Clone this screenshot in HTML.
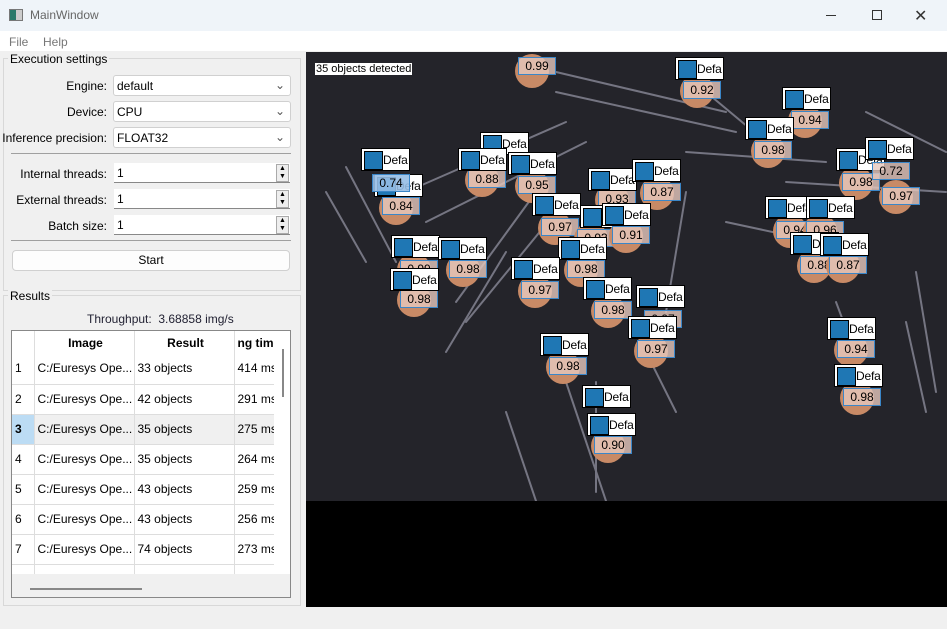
<!DOCTYPE html>
<html><head><meta charset="utf-8"><style>
*{box-sizing:border-box;margin:0;padding:0}
body{width:947px;height:629px;overflow:hidden;background:#f0f0f0;font-family:"Liberation Sans",sans-serif;font-size:12px;color:#000;position:relative}
.a{position:absolute}
.title{left:0;top:0;width:947px;height:31px;background:#eff4f9}
.menu{left:0;top:31px;width:947px;height:20px;background:#fff;color:#777;font-size:12px}
.lbl{text-align:right;font-size:12px}
.combo{background:#fff;border:1px solid #d0d0d0;border-radius:3px;height:21px;padding:3px 3px;font-size:12px}
.spin{background:#fff;border-bottom:1px solid #888;height:20px;padding:3px 3px;font-size:12px}
.img{left:306px;top:52px;width:641px;height:449px;background:#24242a;overflow:hidden}
.d{position:absolute;width:49px;height:23px;background:#fff;border:1px solid #000;font-size:12px;padding:4px 0 0 21px;white-space:nowrap;letter-spacing:-0.2px}
.d:before{content:"";position:absolute;left:2px;top:2px;width:17px;height:17px;background:#1f77b4;border:1px solid #000}
.s{position:absolute;width:38px;height:18px;background:rgba(230,200,190,.8);border:1px solid #3a86c8;font-size:12px;text-align:center;line-height:16px}
.c{position:absolute;width:34px;height:34px;border-radius:50%;background:#c88a66}
table{border-collapse:collapse;table-layout:fixed}
td{height:30px;line-height:29px;border-right:1px solid #ddd;border-bottom:1px solid #ddd;padding:0 0 0 3px;font-size:12px;white-space:nowrap;overflow:hidden}
</style></head><body>
<div class="a title"></div>
<div class="a" style="left:9px;top:9px;width:14px;height:12px;border:1px solid #777;background:linear-gradient(90deg,#2a7a6a 50%,#ccc 50%)"></div>
<div class="a" style="left:30px;top:8px;font-size:12px;color:#666">MainWindow</div>
<div class="a" style="left:826px;top:15px;width:10px;height:1px;background:#333"></div>
<div class="a" style="left:872px;top:10px;width:10px;height:10px;border:1px solid #333"></div>
<div class="a" style="left:914px;top:6px;font-size:16px;color:#333">✕</div>
<div class="a menu"><span class="a" style="left:9px;top:4px">File</span><span class="a" style="left:43px;top:4px">Help</span></div>

<div class="a" style="left:3px;top:58px;width:298px;height:233px;border:1px solid #d8d8d8"></div>
<div class="a" style="left:8px;top:52px;background:#f0f0f0;padding:0 2px">Execution settings</div>
<div class="a lbl" style="left:0;top:79px;width:107px">Engine:</div>
<div class="a combo" style="left:113px;top:75px;width:178px">default<span class="a" style="right:5px;top:2px;color:#555">⌄</span></div>
<div class="a lbl" style="left:0;top:105px;width:107px">Device:</div>
<div class="a combo" style="left:113px;top:101px;width:178px">CPU<span class="a" style="right:5px;top:2px;color:#555">⌄</span></div>
<div class="a lbl" style="left:0;top:131px;width:107px">Inference precision:</div>
<div class="a combo" style="left:113px;top:127px;width:178px">FLOAT32<span class="a" style="right:5px;top:2px;color:#555">⌄</span></div>
<div class="a" style="left:11px;top:153px;width:280px;height:1px;background:#a0a0a0"></div>
<div class="a lbl" style="left:0;top:167px;width:107px">Internal threads:</div>
<div class="a spin" style="left:114px;top:163px;width:176px">1</div>
<div class="a lbl" style="left:0;top:193px;width:107px">External threads:</div>
<div class="a spin" style="left:114px;top:189px;width:176px">1</div>
<div class="a lbl" style="left:0;top:219px;width:107px">Batch size:</div>
<div class="a spin" style="left:114px;top:215px;width:176px">1</div>
<div class="a" style="left:276px;top:164px;width:13px;height:18px;border:1px solid #aaa;background:#eee;font-size:7px;text-align:center;line-height:8px">▲<br>▼</div>
<div class="a" style="left:276px;top:190px;width:13px;height:18px;border:1px solid #aaa;background:#eee;font-size:7px;text-align:center;line-height:8px">▲<br>▼</div>
<div class="a" style="left:276px;top:216px;width:13px;height:18px;border:1px solid #aaa;background:#eee;font-size:7px;text-align:center;line-height:8px">▲<br>▼</div>
<div class="a" style="left:11px;top:240px;width:280px;height:1px;background:#a0a0a0"></div>
<div class="a" style="left:12px;top:250px;width:278px;height:21px;background:#fdfdfd;border:1px solid #d0d0d0;border-radius:4px;text-align:center;line-height:19px">Start</div>

<div class="a" style="left:3px;top:295px;width:298px;height:311px;border:1px solid #d8d8d8"></div>
<div class="a" style="left:8px;top:289px;background:#f0f0f0;padding:0 2px">Results</div>
<div class="a" style="left:87px;top:312px;color:#223">Throughput:&nbsp; 3.68858 img/s</div>
<div class="a" style="left:11px;top:330px;width:280px;height:268px;border:1px solid #888;background:#fff;overflow:hidden">
<table class="a" style="left:0;top:0;width:270px">
<colgroup><col style="width:22px"><col style="width:100px"><col style="width:100px"><col style="width:48px"></colgroup>
<tr style="font-weight:bold"><td style="height:23px;line-height:22px;border-bottom:0"></td><td style="height:23px;line-height:22px;text-align:center;border-bottom:0">Image</td><td style="height:23px;line-height:22px;text-align:center;border-bottom:0">Result</td><td style="height:23px;line-height:22px;border-right:0;border-bottom:0">ng time</td></tr>
<tr><td>1</td><td>C:/Euresys Ope...</td><td>33 objects</td><td>414 ms</td></tr>
<tr><td>2</td><td>C:/Euresys Ope...</td><td>42 objects</td><td>291 ms</td></tr>
<tr style="background:#f0f0f0"><td style="background:#bcdcf4;font-weight:bold">3</td><td>C:/Euresys Ope...</td><td>35 objects</td><td>275 ms</td></tr>
<tr><td>4</td><td>C:/Euresys Ope...</td><td>35 objects</td><td>264 ms</td></tr>
<tr><td>5</td><td>C:/Euresys Ope...</td><td>43 objects</td><td>259 ms</td></tr>
<tr><td>6</td><td>C:/Euresys Ope...</td><td>43 objects</td><td>256 ms</td></tr>
<tr><td>7</td><td>C:/Euresys Ope...</td><td>74 objects</td><td>273 ms</td></tr>
<tr><td>8</td><td>C:/Euresys Ope...</td><td>52 objects</td><td>287 ms</td></tr>
</table>
<div class="a" style="left:262px;top:0;width:18px;height:268px;background:#fff"></div>
<div class="a" style="left:270px;top:18px;width:2px;height:48px;background:#888"></div>
<div class="a" style="left:0;top:243px;width:280px;height:25px;background:#f0f0f0"></div>
<div class="a" style="left:18px;top:257px;width:112px;height:2px;background:#888"></div>
</div>

<div class="a img">
<svg class="a" style="left:0;top:0" width="641" height="449" stroke-linecap="round">
<g stroke="#8a8a98" stroke-width="2" fill="none" opacity=".8">
<line x1="40" y1="115" x2="90" y2="210"/><line x1="20" y1="140" x2="60" y2="210"/>
<line x1="100" y1="140" x2="260" y2="70"/><line x1="120" y1="170" x2="280" y2="90"/>
<line x1="250" y1="20" x2="420" y2="60"/><line x1="250" y1="40" x2="430" y2="80"/>
<line x1="150" y1="250" x2="230" y2="140"/><line x1="160" y1="270" x2="250" y2="160"/>
<line x1="140" y1="300" x2="200" y2="200"/><line x1="480" y1="130" x2="640" y2="140"/>
<line x1="420" y1="170" x2="560" y2="200"/><line x1="380" y1="100" x2="520" y2="110"/>
<line x1="290" y1="330" x2="290" y2="440"/><line x1="260" y1="330" x2="300" y2="449"/>
<line x1="330" y1="280" x2="370" y2="360"/><line x1="600" y1="270" x2="620" y2="360"/>
<line x1="530" y1="250" x2="560" y2="330"/><line x1="380" y1="140" x2="360" y2="260"/>
<line x1="610" y1="220" x2="630" y2="340"/><line x1="200" y1="360" x2="230" y2="449"/>
<line x1="400" y1="40" x2="460" y2="90"/><line x1="560" y1="60" x2="640" y2="100"/>
</g></svg>
<div class="a" style="left:9px;top:11px;background:#fff;font-size:11px;padding:0 1px">35 objects detected</div>
<div class="c" style="left:209px;top:2px"></div><div class="s" style="left:212px;top:5px">0.99</div>
<div class="c" style="left:374px;top:22px"></div><div class="s" style="left:377px;top:29px">0.92</div><div class="d" style="left:369px;top:5px">Defa</div>
<div class="c" style="left:482px;top:52px"></div><div class="s" style="left:485px;top:59px">0.94</div><div class="d" style="left:476px;top:35px">Defa</div>
<div class="c" style="left:445px;top:82px"></div><div class="s" style="left:448px;top:89px">0.98</div><div class="d" style="left:439px;top:65px">Defa</div>
<div class="c" style="left:159px;top:111px"></div><div class="s" style="left:162px;top:118px">0.88</div><div class="d" style="left:174px;top:80px">Defa</div><div class="d" style="left:152px;top:96px">Defa</div>
<div class="c" style="left:209px;top:117px"></div><div class="s" style="left:212px;top:124px">0.95</div><div class="d" style="left:202px;top:100px">Defa</div>
<div class="c" style="left:533px;top:114px"></div><div class="s" style="left:536px;top:121px">0.98</div><div class="d" style="left:530px;top:96px">Defa</div>
<div class="c" style="left:573px;top:128px"></div><div class="s" style="left:576px;top:135px">0.97</div><div class="s" style="left:566px;top:110px">0.72</div><div class="d" style="left:559px;top:85px">Defa</div>
<div class="c" style="left:73px;top:139px"></div><div class="s" style="left:76px;top:145px">0.84</div><div class="d" style="left:68px;top:122px">Defa</div><div class="s" style="left:66px;top:122px;background:rgba(150,190,230,.9)">0.74</div><div class="d" style="left:55px;top:96px">Defa</div>
<div class="c" style="left:289px;top:131px"></div><div class="s" style="left:292px;top:138px">0.93</div><div class="d" style="left:282px;top:116px">Defa</div>
<div class="c" style="left:334px;top:124px"></div><div class="s" style="left:337px;top:131px">0.87</div><div class="d" style="left:326px;top:107px">Defa</div>
<div class="c" style="left:232px;top:159px"></div><div class="s" style="left:235px;top:166px">0.97</div><div class="d" style="left:226px;top:141px">Defa</div>
<div class="c" style="left:268px;top:170px"></div><div class="s" style="left:271px;top:177px">0.93</div><div class="d" style="left:274px;top:153px">Defa</div>
<div class="c" style="left:303px;top:167px"></div><div class="s" style="left:306px;top:174px">0.91</div><div class="d" style="left:296px;top:151px">Defa</div>
<div class="c" style="left:467px;top:162px"></div><div class="s" style="left:470px;top:169px">0.94</div><div class="d" style="left:459px;top:144px">Defa</div>
<div class="c" style="left:497px;top:162px"></div><div class="s" style="left:500px;top:169px">0.96</div><div class="d" style="left:500px;top:144px">Defa</div>
<div class="c" style="left:91px;top:201px"></div><div class="s" style="left:94px;top:208px">0.99</div><div class="d" style="left:85px;top:183px">Defa</div>
<div class="c" style="left:140px;top:201px"></div><div class="s" style="left:143px;top:208px">0.98</div><div class="d" style="left:132px;top:185px">Defa</div>
<div class="c" style="left:258px;top:201px"></div><div class="s" style="left:261px;top:208px">0.98</div><div class="d" style="left:252px;top:185px">Defa</div>
<div class="c" style="left:491px;top:197px"></div><div class="s" style="left:494px;top:204px">0.88</div><div class="d" style="left:484px;top:180px">Defa</div>
<div class="c" style="left:520px;top:197px"></div><div class="s" style="left:523px;top:204px">0.87</div><div class="d" style="left:514px;top:181px">Defa</div>
<div class="c" style="left:91px;top:231px"></div><div class="s" style="left:94px;top:238px">0.98</div><div class="d" style="left:84px;top:216px">Defa</div>
<div class="c" style="left:212px;top:222px"></div><div class="s" style="left:215px;top:229px">0.97</div><div class="d" style="left:205px;top:205px">Defa</div>
<div class="c" style="left:285px;top:242px"></div><div class="s" style="left:288px;top:249px">0.98</div><div class="d" style="left:277px;top:225px">Defa</div>
<div class="c" style="left:328px;top:282px"></div><div class="s" style="left:331px;top:288px">0.97</div><div class="s" style="left:338px;top:258px">0.97</div><div class="d" style="left:322px;top:264px">Defa</div><div class="d" style="left:330px;top:233px">Defa</div>
<div class="c" style="left:528px;top:281px"></div><div class="s" style="left:531px;top:288px">0.94</div><div class="d" style="left:521px;top:265px">Defa</div>
<div class="c" style="left:240px;top:298px"></div><div class="s" style="left:243px;top:305px">0.98</div><div class="d" style="left:234px;top:281px">Defa</div>
<div class="c" style="left:534px;top:329px"></div><div class="s" style="left:537px;top:336px">0.98</div><div class="d" style="left:528px;top:312px">Defa</div>
<div class="c" style="left:285px;top:377px"></div><div class="s" style="left:288px;top:384px">0.90</div><div class="d" style="left:281px;top:361px">Defa</div><div class="d" style="left:276px;top:333px">Defa</div>
</div>
<div class="a" style="left:306px;top:501px;width:641px;height:106px;background:#000"></div>
</body></html>
